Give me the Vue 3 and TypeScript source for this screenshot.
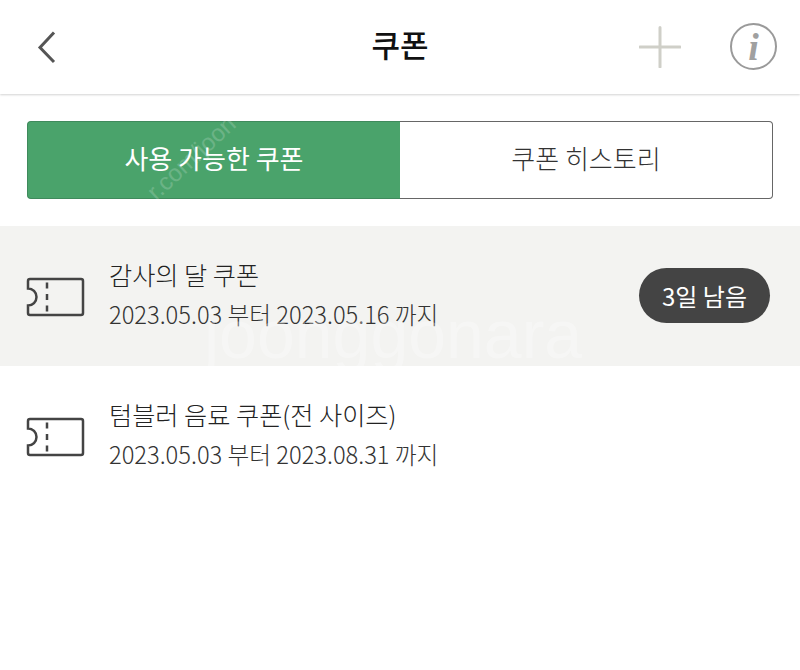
<template>
  <div class="coupon-page">
    <header class="coupon-header">
      <button class="coupon-header__back" type="button" aria-label="back">
        <svg width="20" height="34" viewBox="0 0 20 34">
          <path d="M17 2.500 3 17.500 17 32" fill="none" stroke="#555" stroke-width="3" />
        </svg>
      </button>
      <h1 class="coupon-header__title">쿠폰</h1>
      <div class="coupon-header__actions">
        <svg width="42" height="42" viewBox="0 0 42 42">
          <path d="M21 1.500V41M1 21h40" fill="none" stroke="#cfcfc8" stroke-width="3" stroke-linecap="round" />
        </svg>
        <span class="info-icon">i</span>
      </div>
    </header>

    <div class="tabs">
      <button
        v-for="tab in tabs"
        :key="tab.label"
        class="tabs__item"
        :class="{ 'tabs__item--active': tab.active }"
        type="button"
      >
        {{ tab.label }}
      </button>
    </div>

    <ul class="coupons">
      <li
        v-for="coupon in coupons"
        :key="coupon.name"
        class="coupon"
        :class="{ 'coupon--highlight': coupon.badge }"
      >
        <svg class="coupon__icon" width="60" height="40" viewBox="0 0 60 40">
          <path
            d="M5 2h51a2 2 0 0 1 2 2v32a2 2 0 0 1-2 2H5a2 2 0 0 1-2-2v-7.500a8.500 8.500 0 0 0 0-17V4a2 2 0 0 1 2-2z"
            fill="none"
            stroke="#444"
            stroke-width="2.500"
          />
          <path d="M22 5.500v30" fill="none" stroke="#444" stroke-width="2.500" stroke-dasharray="6 5.500" />
        </svg>
        <div class="coupon__text">
          <p class="coupon__name">{{ coupon.name }}</p>
          <p class="coupon__period">{{ coupon.period }}</p>
        </div>
        <span v-if="coupon.badge" class="coupon__badge">{{ coupon.badge }}</span>
      </li>
    </ul>

    <span class="watermark">joonggonara</span>
    <span class="watermark-line">r.com/joon</span>
  </div>
</template>

<script setup lang="ts">
const tabs = [
  { label: '사용 가능한 쿠폰', active: true },
  { label: '쿠폰 히스토리', active: false }
]

const coupons = [
  { name: '감사의 달 쿠폰', period: '2023.05.03 부터 2023.05.16 까지', badge: '3일 남음' },
  { name: '텀블러 음료 쿠폰(전 사이즈)', period: '2023.05.03 부터 2023.08.31 까지', badge: '' }
]
</script>

<style scoped>
.coupon-page {
  position: relative;
  width: 800px;
  height: 670px;
  overflow: hidden;
  background: #ffffff;
  font-family: 'Noto Sans CJK KR', 'Noto Sans', sans-serif;
  color: #333333;
}

.coupon-header {
  display: flex;
  align-items: center;
  justify-content: space-between;
  position: relative;
  box-sizing: border-box;
  height: 94px;
  padding: 0 23px 1px 37px;
  box-shadow: 0 1px 2px #d4d4d4;
}

.coupon-header__back {
  display: flex;
  padding: 0;
  border: 0;
  background: none;
}

.coupon-header__title {
  position: absolute;
  left: 0;
  right: 0;
  top: 24px;
  margin: 0;
  text-align: center;
  font-size: 31px;
  line-height: 40px;
  font-weight: 500;
  color: #111111;
}

.coupon-header__actions {
  display: flex;
  align-items: center;
  gap: 49px;
}

.info-icon {
  box-sizing: border-box;
  display: flex;
  align-items: center;
  justify-content: center;
  width: 47px;
  height: 47px;
  border: 2px solid #9a9a9a;
  border-radius: 50%;
  font-family: 'Liberation Serif', serif;
  font-style: italic;
  font-weight: 700;
  font-size: 38px;
  line-height: 1;
  color: #a0a0a0;
}

.tabs {
  display: flex;
  height: 78px;
  margin: 27px 27px 0;
}

.tabs__item {
  flex: 1;
  box-sizing: border-box;
  padding: 0 0 6px;
  border: 1px solid #666666;
  border-left: 0;
  border-radius: 0 4px 4px 0;
  background: #ffffff;
  font-family: inherit;
  font-size: 26px;
  font-weight: 300;
  color: #333333;
}

.tabs__item--active {
  border: 1px solid #3f8a5c;
  border-right: 0;
  border-radius: 4px 0 0 4px;
  background: #4aa36b;
  font-weight: 400;
  color: #ffffff;
}

.coupons {
  margin: 27px 0 0;
  padding: 0;
  list-style: none;
}

.coupon {
  display: flex;
  align-items: center;
  height: 140px;
  box-sizing: border-box;
  padding: 0 30px 0 25px;
}

.coupon--highlight {
  background: #f3f3f1;
}

.coupon__icon {
  flex: none;
  margin-top: 2px;
}

.coupon__text {
  flex: 1;
  margin: -4px 0 0 24px;
}

.coupon__name {
  margin: 0;
  font-size: 25.200px;
  line-height: 36px;
  font-weight: 300;
  color: #222222;
}

.coupon__period {
  margin: 4px 0 0;
  font-size: 23.700px;
  line-height: 36px;
  font-weight: 300;
  color: #333333;
}

.coupon__badge {
  display: flex;
  align-items: center;
  justify-content: center;
  box-sizing: border-box;
  width: 131px;
  height: 55px;
  margin-top: -2px;
  border-radius: 28px;
  background: #444444;
  font-size: 24px;
  color: #ffffff;
}

.watermark {
  position: absolute;
  left: 204px;
  top: 294px;
  font-family: 'Liberation Sans', sans-serif;
  font-size: 68px;
  line-height: 80px;
  color: #ffffff;
  opacity: 0.3;
  pointer-events: none;
}

.watermark-line {
  position: absolute;
  left: 136px;
  top: 144px;
  width: 110px;
  font-family: 'Liberation Sans', sans-serif;
  font-size: 24px;
  line-height: 28px;
  white-space: nowrap;
  color: #ffffff;
  opacity: 0.18;
  transform: rotate(-43deg);
  pointer-events: none;
}
</style>
